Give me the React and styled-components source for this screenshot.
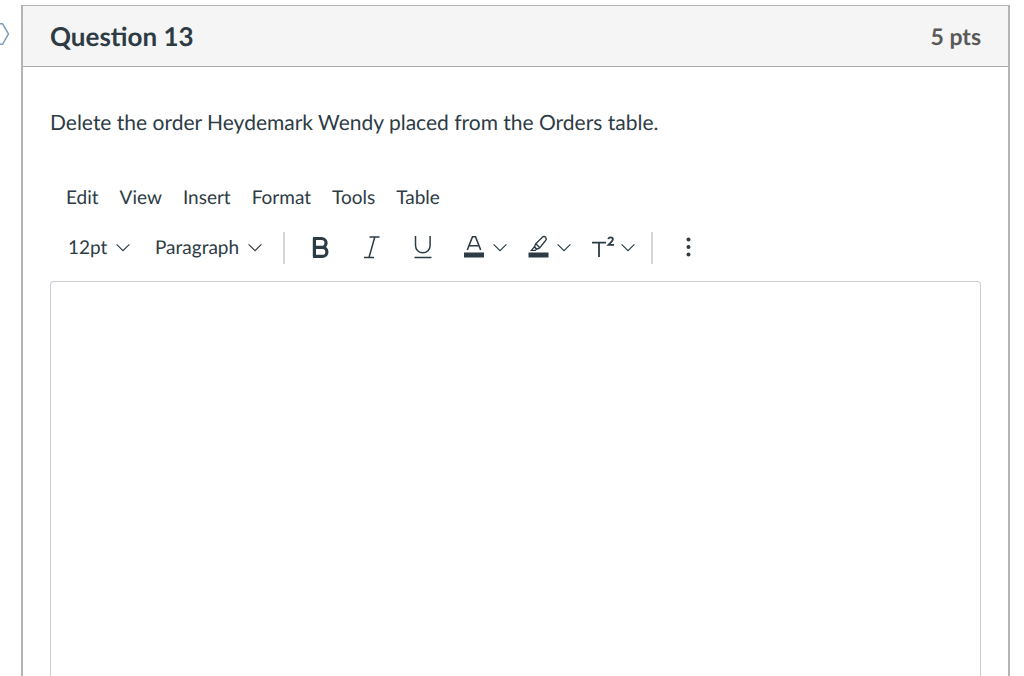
import React from "react";
import styled, { createGlobalStyle } from "styled-components";

const ink = "#2d3b45";

const GlobalStyle = createGlobalStyle`
  *, *::before, *::after { box-sizing: border-box; }
  body {
    margin: 0;
    background: #fff;
    color: ${ink};
    font-family: Lato, "Liberation Sans", sans-serif;
    text-rendering: geometricPrecision;
  }
  button, select, textarea { text-rendering: inherit; }
`;

const Page = styled.main`
  display: flex;
  min-height: 100vh;
  padding: 5px 14px 0 0;
`;

const Gutter = styled.aside`
  flex: 0 0 21px;
  padding-top: 17px;
`;

const FlagButton = styled.button`
  display: block;
  padding: 0;
  border: 0;
  background: none;
`;

const Card = styled.section`
  flex: 1;
  min-width: 0;
  display: flex;
  flex-direction: column;
  border: solid #b4b4b4;
  border-width: 1px 2px 0;
`;

const Header = styled.header`
  display: flex;
  align-items: center;
  justify-content: space-between;
  height: 61px;
  padding: 0 27px;
  background: #f5f5f5;
  border-bottom: 1px solid #aaa;
`;

const Title = styled.h2`
  margin: 0;
  font-size: 26px;
  line-height: 32px;
  font-weight: 700;
`;

const Points = styled.span`
  color: #595959;
  font-size: 23px;
  line-height: 32px;
  font-weight: 700;
`;

const Body = styled.div`
  flex: 1;
  display: flex;
  flex-direction: column;
  padding: 40px 27px 0;
`;

const Prompt = styled.p`
  margin: 0 0 47px;
  font-size: 21px;
  line-height: 32px;
`;

const MenuBar = styled.nav`
  display: flex;
  gap: 21px;
  padding-left: 16px;
  margin-bottom: 22px;
`;

const MenuItem = styled.button`
  padding: 0;
  border: 0;
  background: none;
  color: inherit;
  font: 400 19px/24px Lato, "Liberation Sans", sans-serif;
`;

const Toolbar = styled.div`
  display: flex;
  align-items: center;
  height: 32px;
  padding-left: 18px;
  margin-bottom: 17px;
`;

const SelectWrap = styled.label`
  display: grid;
  align-items: center;
  width: ${(p) => p.$width}px;
  margin-right: ${(p) => p.$after}px;

  > * { grid-area: 1 / 1; }
  > svg { justify-self: end; pointer-events: none; }
`;

const Select = styled.select`
  appearance: none;
  width: 100%;
  height: 32px;
  padding: 0;
  border: 0;
  background: none;
  color: inherit;
  font: 400 19px/24px Lato, "Liberation Sans", sans-serif;
`;

const Divider = styled.span`
  width: 2px;
  height: 32px;
  background: #d2d6d9;
`;

const ButtonGroup = styled.div`
  display: flex;
  gap: ${(p) => p.$gap}px;
  padding: 0 ${(p) => p.$end}px 0 ${(p) => p.$start}px;
`;

const IconButton = styled.button`
  display: flex;
  align-items: center;
  justify-content: ${(p) => (p.$split ? "space-between" : "center")};
  width: ${(p) => (p.$split ? 43 : 32)}px;
  height: 32px;
  padding: 0;
  border: 0;
  background: none;
  color: inherit;

  > svg { flex: none; }
`;

const Editor = styled.textarea`
  display: block;
  flex: 1;
  width: 100%;
  min-height: 240px;
  padding: 16px;
  border: solid #c7cdd1;
  border-width: 1px 1px 0;
  border-radius: 4px 4px 0 0;
  outline: none;
  resize: none;
  background: #fff;
  color: inherit;
  font: 400 19px/24px Lato, "Liberation Sans", sans-serif;
`;

const Icon = ({ w = 24, h = 32, children, sw = 1.6 }) => (
  <svg
    width={w}
    height={h}
    viewBox={`0 0 ${w} ${h}`}
    fill="none"
    stroke="currentColor"
    strokeWidth={sw}
    aria-hidden="true"
  >
    {children}
  </svg>
);

const Chevron = () => (
  <Icon w={14} h={10} sw={1.1}>
    <path d="M.6 1.300 7 7.700l6.400-6.400" />
  </Icon>
);

const BoldIcon = () => (
  <Icon sw={3.2}>
    <path d="M5.400 6.200v18.600M4 6.500h8.600a4.400 4.400 0 0 1 0 8.900H5M12.600 15.400h.8a4.500 4.500 0 0 1 0 9H4" />
  </Icon>
);

const ItalicIcon = () => (
  <Icon sw={1.5}>
    <path d="M9.500 5h10M4 25.500h10M14.800 5 9 25.500" />
  </Icon>
);

const UnderlineIcon = () => (
  <Icon sw={1.5}>
    <path d="M4.500 4v9.500a7.300 7.300 0 0 0 14.600 0V4M3.500 25.500h17" />
  </Icon>
);

const TextColorIcon = () => (
  <Icon w={20}>
    <path d="M3.300 18 8.500 4.800h3L16.700 18M5.200 13.700h9.600" />
    <path d="M0 20.500h20v5H0z" fill="currentColor" stroke="none" />
  </Icon>
);

const HighlightIcon = () => (
  <Icon w={21} sw={1.3}>
    <path d="M7.800 11.700 14.300 5.200c1.200-1.100 2.500-.8 3.300.1.900 1 .9 2.200 0 3.200l-5.800 7.200zM7.800 11.700c-.7 1-.9 1.800-1.100 3.400l1.900 1.900c1.300-.2 2.300-.5 3.200-1.300" />
    <path d="M6.300 14.800 3.400 18.300h3.900l1.200-1.200z" />
    <path d="M.5 20.500h20v5H.5z" fill="currentColor" stroke="none" />
  </Icon>
);

const SuperscriptIcon = () => (
  <Icon w={23} sw={1.8}>
    <path d="M0 10.600h14M7 10.600V25" />
    <path d="M16.300 7.200c.2-1.300 1.200-1.800 2.400-1.800 1.300 0 2.200.7 2.200 1.900 0 1.800-2.400 3.300-4.500 5.600H22" />
  </Icon>
);

const MoreIcon = () => (
  <Icon>
    <g fill="currentColor" stroke="none">
      <circle cx="12.500" cy="7.500" r="2" />
      <circle cx="12.500" cy="15" r="2" />
      <circle cx="12.500" cy="22.500" r="2" />
    </g>
  </Icon>
);

const menus = ["Edit", "View", "Insert", "Format", "Tools", "Table"];

export default function App() {
  return (
    <>
      <GlobalStyle />
      <Page>
        <Gutter>
          <FlagButton aria-label="Flag question">
            <svg width="12" height="24" viewBox="0 0 12 24" fill="none" stroke="#7f9fb8" strokeWidth="1.500" aria-hidden="true">
              <path d="M-4 1.700h6.500L8.500 12l-6 10.300H-4" />
            </svg>
          </FlagButton>
        </Gutter>
        <Card>
          <Header>
            <Title>Question 13</Title>
            <Points>5 pts</Points>
          </Header>
          <Body>
            <Prompt id="prompt">
              Delete the order Heydemark Wendy placed from the Orders table.
            </Prompt>
            <MenuBar aria-label="Editor menu">
              {menus.map((m) => (
                <MenuItem key={m}>{m}</MenuItem>
              ))}
            </MenuBar>
            <Toolbar role="toolbar" aria-label="Formatting">
              <SelectWrap $width={62} $after={25}>
                <Select aria-label="Font size" defaultValue="12pt">
                  <option>12pt</option>
                </Select>
                <Chevron />
              </SelectWrap>
              <SelectWrap $width={107} $after={21}>
                <Select aria-label="Block style" defaultValue="Paragraph">
                  <option>Paragraph</option>
                </Select>
                <Chevron />
              </SelectWrap>
              <Divider />
              <ButtonGroup $gap={19} $start={20} $end={25}>
                <IconButton aria-label="Bold"><BoldIcon /></IconButton>
                <IconButton aria-label="Italic"><ItalicIcon /></IconButton>
                <IconButton aria-label="Underline"><UnderlineIcon /></IconButton>
              </ButtonGroup>
              <ButtonGroup $gap={21} $start={0} $end={16}>
                <IconButton $split aria-label="Text color"><TextColorIcon /><Chevron /></IconButton>
                <IconButton $split aria-label="Highlight color"><HighlightIcon /><Chevron /></IconButton>
                <IconButton $split aria-label="Superscript and subscript"><SuperscriptIcon /><Chevron /></IconButton>
              </ButtonGroup>
              <Divider />
              <ButtonGroup $gap={0} $start={19} $end={0}>
                <IconButton aria-label="More"><MoreIcon /></IconButton>
              </ButtonGroup>
            </Toolbar>
            <Editor aria-labelledby="prompt" />
          </Body>
        </Card>
      </Page>
    </>
  );
}
